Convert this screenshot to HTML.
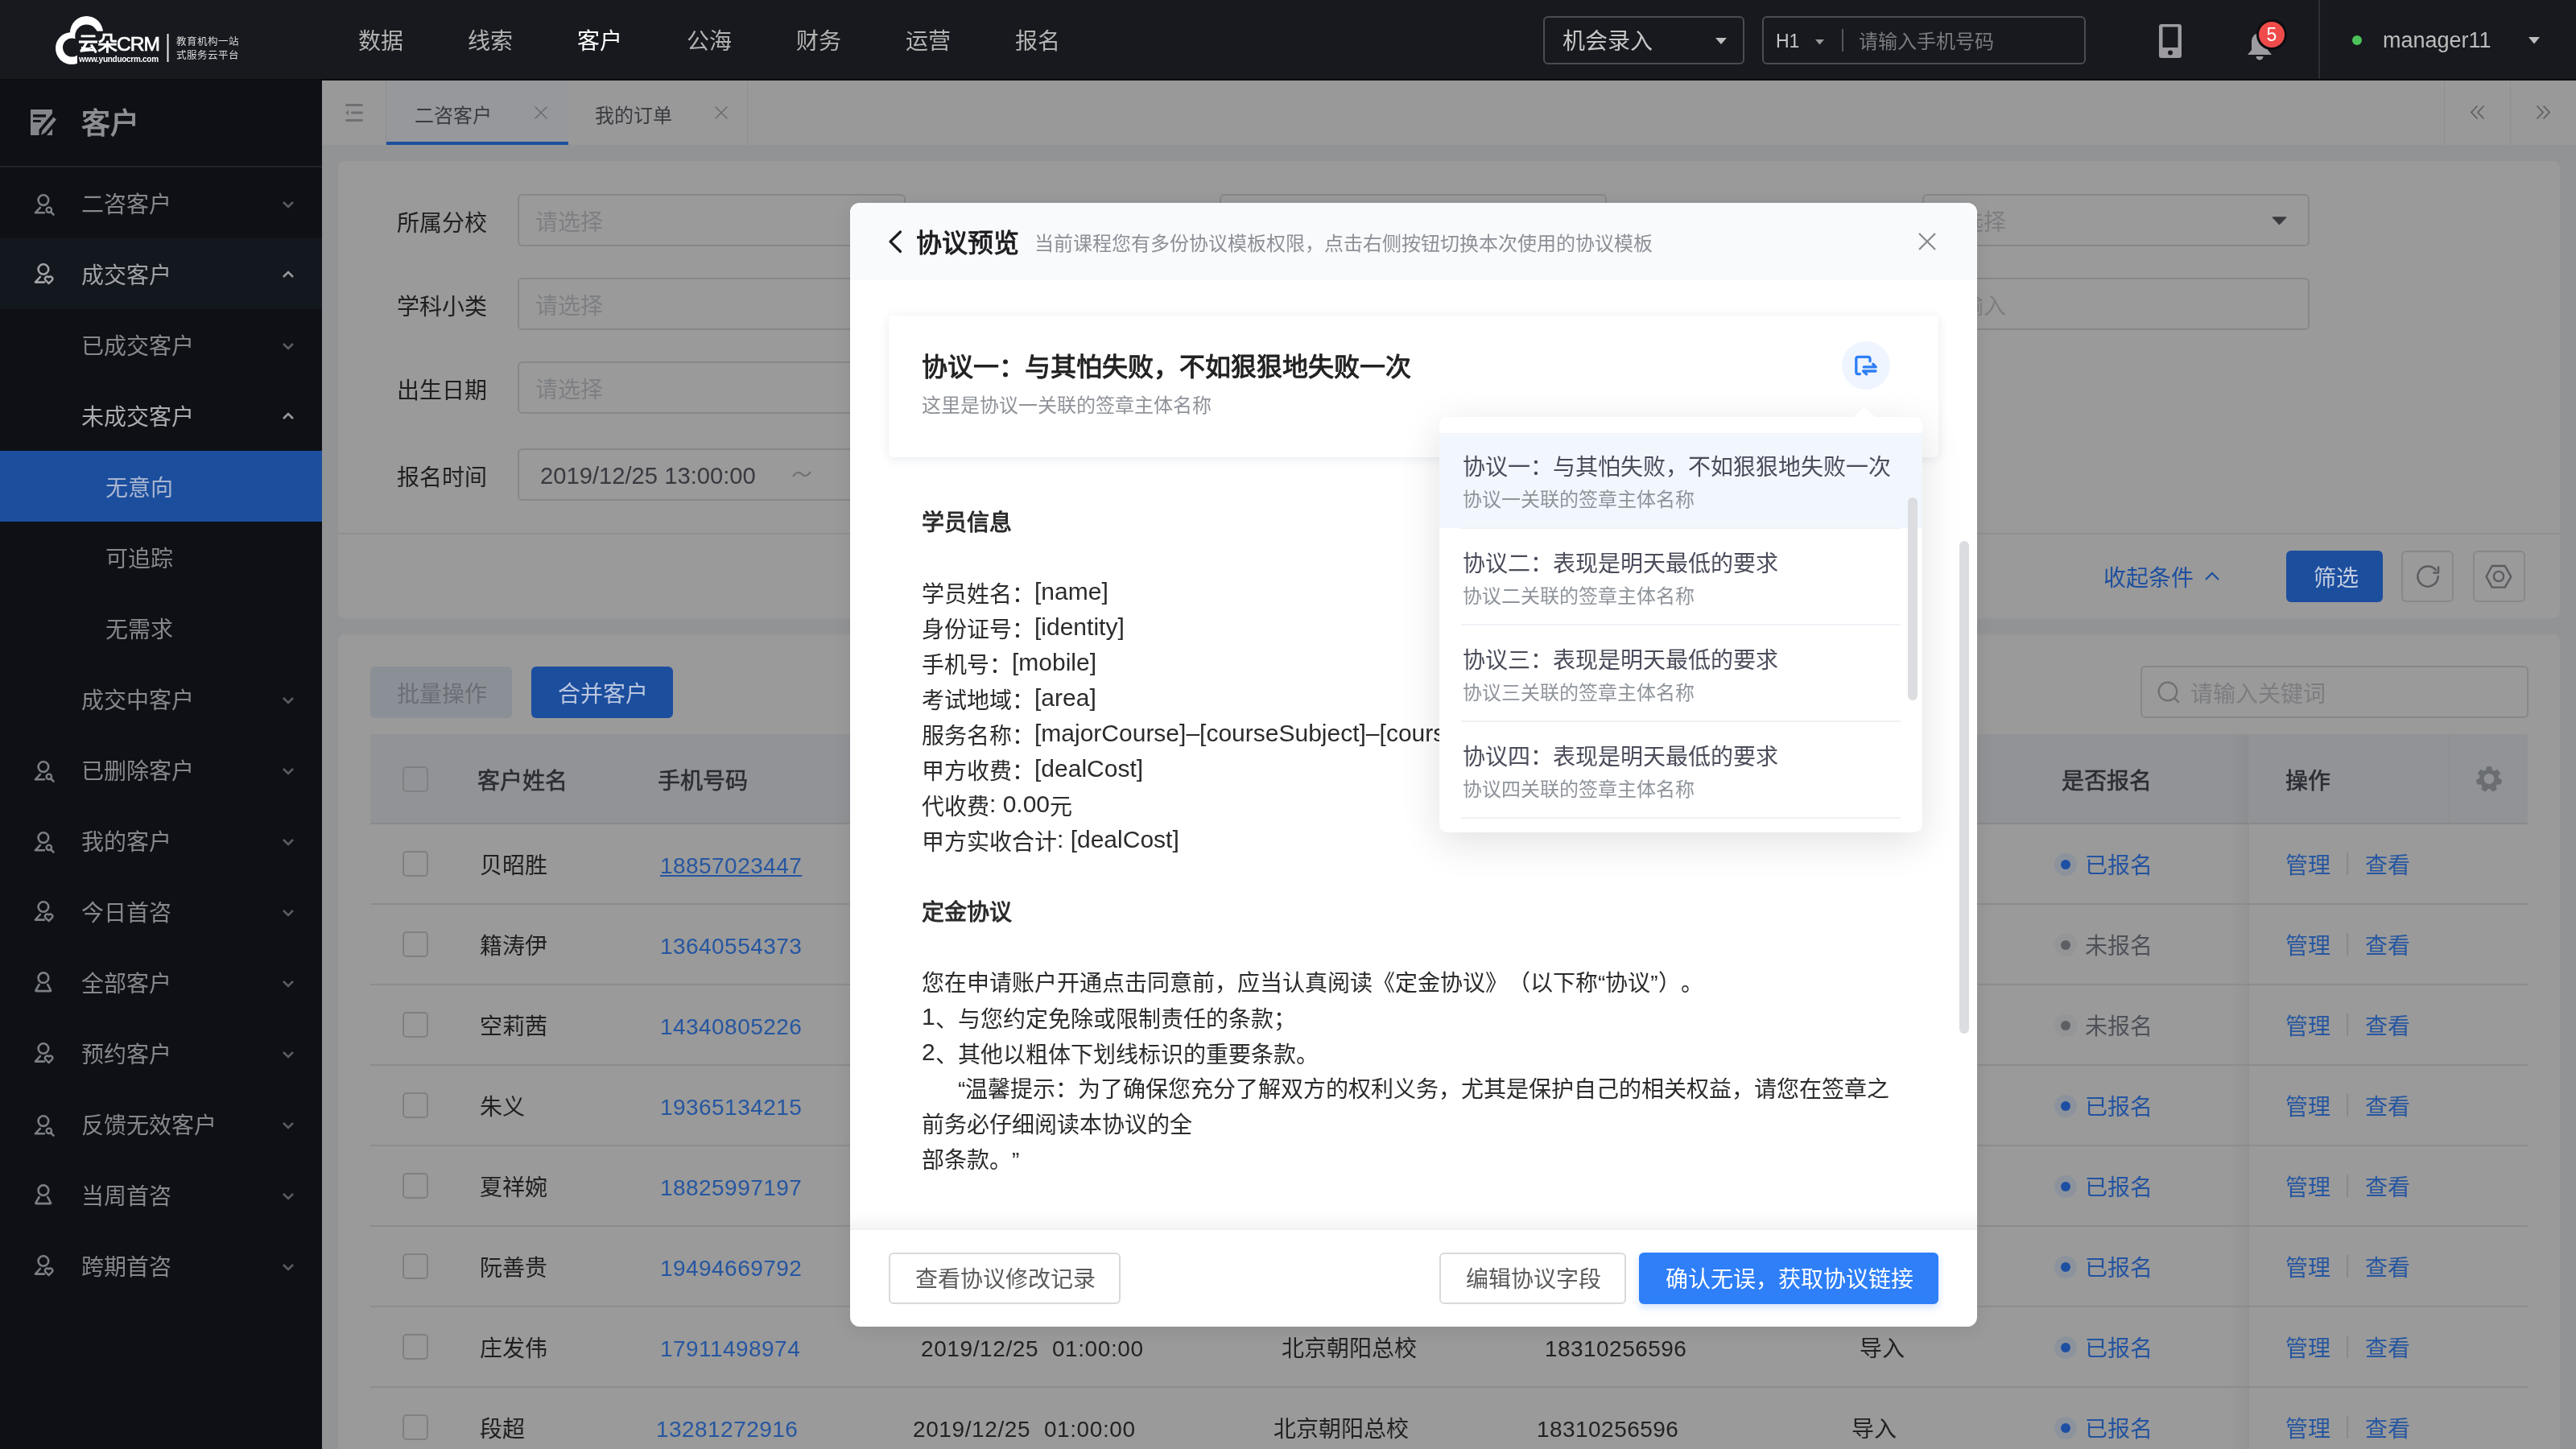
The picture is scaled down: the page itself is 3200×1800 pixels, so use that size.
<!DOCTYPE html>
<html lang="zh-CN"><head><meta charset="utf-8">
<style>
*{box-sizing:border-box;margin:0;padding:0}
html,body{width:3200px;height:1800px;overflow:hidden}
body{position:relative;will-change:transform;font-family:"Liberation Sans",sans-serif;background:#929395;color:#222}
.a{position:absolute}
.t{position:absolute;white-space:nowrap;line-height:40px;height:40px;text-spacing-trim:space-all}
svg{position:absolute;overflow:visible}
/* header */
#hdr{left:0;top:0;width:3200px;height:100px;background:#17191e;border-bottom:2px solid #0b0c0f}
.nav{font-size:28px;color:#b3b3b3;top:32px}
.box{border:2px solid #4a4c51;border-radius:6px}
/* sidebar */
#side{left:0;top:100px;width:400px;height:1700px;background:#0e1015}
.si{font-size:28px;color:#86888c}
/* main */
.card{background:#9a9a9a;border-radius:8px}
.inp{border:2px solid #858688;border-radius:6px;height:65px}
.ph{font-size:28px;color:#7d7e81}
.lbl{font-size:28px;color:#1f1f20}
.row-b{height:2px;background:#8b8c8e}
.cell{font-size:28px;color:#222}
.lnk{font-size:28px;color:#1c4b98}
</style></head>
<body>
<!-- HEADER -->
<div id="hdr" class="a"></div>
<svg style="left:0;top:0" width="320" height="100" viewBox="0 0 320 100">
  <defs>
    <mask id="cm">
      <rect x="0" y="0" width="320" height="100" fill="black"/>
      <circle cx="89" cy="60" r="20" fill="white"/>
      <circle cx="107.5" cy="40.5" r="20.5" fill="white"/>
      <circle cx="89.5" cy="59" r="11.5" fill="black"/>
      <circle cx="107.5" cy="44.8" r="14.3" fill="black"/>
      <rect x="96" y="62" width="40" height="30" fill="black"/>
      <rect x="115" y="38.7" width="20" height="30" fill="black"/>
    </mask>
  </defs>
  <rect x="0" y="0" width="320" height="100" fill="#fff" mask="url(#cm)"/>
  <rect x="207.5" y="42" width="2" height="35" fill="#e8e8e8"/>
</svg>
<div class="t" style="left:97px;top:34px;font-size:25px;font-weight:bold;color:#fff;line-height:40px;letter-spacing:-1px">云朵<span style="font-weight:normal;-webkit-text-stroke:0.7px #fff;letter-spacing:-1px;font-size:24.5px">CRM</span></div>
<div class="t" style="left:98px;top:64px;font-size:10px;line-height:20px;height:20px;color:#fff;font-weight:bold;letter-spacing:-0.28px">www.yunduocrm.com</div>
<div class="t" style="left:219px;top:44px;font-size:12.5px;line-height:17px;height:40px;color:#dcdcdc;white-space:normal;width:80px">教育机构一站<br>式服务云平台</div>

<div class="t nav" style="left:445px">数据</div>
<div class="t nav" style="left:581px">线索</div>
<div class="t nav" style="left:717px;color:#fff">客户</div>
<div class="t nav" style="left:853px">公海</div>
<div class="t nav" style="left:989px">财务</div>
<div class="t nav" style="left:1125px">运营</div>
<div class="t nav" style="left:1261px">报名</div>

<div class="a box" style="left:1917px;top:20px;width:250px;height:60px"></div>
<div class="t" style="left:1941px;top:32px;font-size:28px;color:#c6c6c6">机会录入</div>
<svg style="left:2131px;top:47px" width="14" height="8"><path d="M0 0H14L7 8Z" fill="#bdbdbd"/></svg>
<div class="a box" style="left:2189px;top:20px;width:402px;height:60px"></div>
<div class="t" style="left:2206px;top:31px;font-size:23px;color:#c6c6c6">H1</div>
<svg style="left:2255px;top:49px" width="11" height="7"><path d="M0 0H11L5.5 6.5Z" fill="#9a9a9a"/></svg>
<div class="a" style="left:2288px;top:36px;width:2px;height:28px;background:#55575c"></div>
<div class="t" style="left:2309px;top:32px;font-size:24px;color:#7a7c80">请输入手机号码</div>

<svg style="left:2682px;top:30px" width="28" height="42" viewBox="0 0 28 42">
  <rect x="0" y="0" width="28" height="42" rx="3" fill="#9c9ca0"/>
  <rect x="4.5" y="3.5" width="19" height="25.5" fill="#17191e"/>
  <circle cx="14" cy="35.5" r="3" fill="#17191e"/>
</svg>
<svg style="left:2790px;top:38px" width="34" height="38" viewBox="0 0 34 38">
  <path d="M17 3C10.5 3 7 8 7 14V24L2 30H32L27 24V14C27 8 23.5 3 17 3Z" fill="#9c9ca0"/>
  <path d="M12.5 32A4.5 4.5 0 0 0 21.5 32Z" fill="#9c9ca0"/>
</svg>
<div class="a" style="left:2803px;top:24px;width:38px;height:38px;border-radius:50%;background:#ef4b4b;border:3px solid #0b0c0f"></div>
<div class="t" style="left:2803px;top:23px;width:38px;text-align:center;font-size:23px;color:#fff">5</div>
<div class="a" style="left:2880px;top:0;width:2px;height:98px;background:#2c2e33"></div>
<div class="a" style="left:2922px;top:44px;width:12px;height:12px;border-radius:50%;background:#4cc25a"></div>
<div class="t" style="left:2960px;top:30px;font-size:27px;color:#bdbdbd">manager11</div>
<svg style="left:3141px;top:46px" width="14" height="9"><path d="M0 0H14L7 8.5Z" fill="#bdbdbd"/></svg>

<!-- SIDEBAR -->
<div id="side" class="a"></div>

<svg style="left:30px;top:130px" width="50" height="45" viewBox="0 0 50 45"><path d="M8 6H35V11L18.5 31V38H8Z M28 38L35 30V38Z" fill="#83848c"/><rect x="11" y="12.2" width="16" height="3.4" fill="#0e1015"/><rect x="11" y="19" width="9.8" height="2.9" fill="#0e1015"/><path d="M36.5 15.5L40 18.5L26.5 34.5L21 38L22.5 32Z" fill="#83848c"/></svg>
<div class="t" style="left:101px;top:134.0px;height:40px;line-height:40px;font-size:36px;color:#8d8e92;font-weight:bold">客户</div>
<div class="a" style="left:0px;top:206px;width:400px;height:2px;background:#1f2126"></div>
<div class="a" style="left:0px;top:296px;width:400px;height:88px;background:#13171e"></div>
<div class="a" style="left:0px;top:560px;width:400px;height:88px;background:#1c4e9e"></div>
<div class="t" style="left:101px;top:235.0px;height:40px;line-height:40px;font-size:28px;color:#86888c;">二咨客户</div>
<svg style="left:30px;top:225px" width="60" height="60" viewBox="0 0 60 60"><circle cx="23.9" cy="23.6" r="6.3" stroke="#7b7f86" stroke-width="2.6" fill="none" stroke-linecap="round" stroke-linejoin="round"/><path d="M19.9 32.9L13.9 39.3H25" stroke="#7b7f86" stroke-width="2.6" fill="none" stroke-linecap="round" stroke-linejoin="round"/><circle cx="30.8" cy="35.8" r="3.2" fill="none" stroke="#7b7f86" stroke-width="2.4"/><path d="M33.3 38.3L36.5 41.6" stroke="#7b7f86" stroke-width="2.6" fill="none" stroke-linecap="round" stroke-linejoin="round"/></svg>
<svg style="left:0px;top:0px" width="1" height="1" viewBox="0 0 1 1"><path d="M352 251 L358 257 L364 251" fill="none" stroke="#585d65" stroke-width="2.6"/></svg>
<div class="t" style="left:101px;top:323.0px;height:40px;line-height:40px;font-size:28px;color:#a2a3a6;">成交客户</div>
<svg style="left:30px;top:313px" width="60" height="60" viewBox="0 0 60 60"><circle cx="23.9" cy="21.5" r="6.3" stroke="#a3a4a7" stroke-width="2.6" fill="none" stroke-linecap="round" stroke-linejoin="round"/><path d="M19.9 31L13.9 37.6H25" stroke="#a3a4a7" stroke-width="2.6" fill="none" stroke-linecap="round" stroke-linejoin="round"/><path d="M30.6 39.2L26.6 35.2A2.8 2.8 0 0 1 30.6 31.3A2.8 2.8 0 0 1 34.6 35.2Z" fill="none" stroke="#a3a4a7" stroke-width="2.4" stroke-linejoin="round"/></svg>
<svg style="left:0px;top:0px" width="1" height="1" viewBox="0 0 1 1"><path d="M352 344 L358 338 L364 344" fill="none" stroke="#9a9b9e" stroke-width="2.6"/></svg>
<div class="t" style="left:101px;top:411.0px;height:40px;line-height:40px;font-size:28px;color:#86888c;">已成交客户</div>
<svg style="left:0px;top:0px" width="1" height="1" viewBox="0 0 1 1"><path d="M352 427 L358 433 L364 427" fill="none" stroke="#585d65" stroke-width="2.6"/></svg>
<div class="t" style="left:101px;top:499.0px;height:40px;line-height:40px;font-size:28px;color:#acadb0;">未成交客户</div>
<svg style="left:0px;top:0px" width="1" height="1" viewBox="0 0 1 1"><path d="M352 520 L358 514 L364 520" fill="none" stroke="#9a9b9e" stroke-width="2.6"/></svg>
<div class="t" style="left:131px;top:587.0px;height:40px;line-height:40px;font-size:28px;color:#a9b6cf;">无意向</div>
<div class="t" style="left:131px;top:675.0px;height:40px;line-height:40px;font-size:28px;color:#86888c;">可追踪</div>
<div class="t" style="left:131px;top:763.0px;height:40px;line-height:40px;font-size:28px;color:#86888c;">无需求</div>
<div class="t" style="left:101px;top:851.0px;height:40px;line-height:40px;font-size:28px;color:#86888c;">成交中客户</div>
<svg style="left:0px;top:0px" width="1" height="1" viewBox="0 0 1 1"><path d="M352 867 L358 873 L364 867" fill="none" stroke="#585d65" stroke-width="2.6"/></svg>
<div class="t" style="left:101px;top:939.0px;height:40px;line-height:40px;font-size:28px;color:#86888c;">已删除客户</div>
<svg style="left:30px;top:929px" width="60" height="60" viewBox="0 0 60 60"><circle cx="23.9" cy="23.6" r="6.3" stroke="#7b7f86" stroke-width="2.6" fill="none" stroke-linecap="round" stroke-linejoin="round"/><path d="M19.9 32.9L13.9 39.3H25" stroke="#7b7f86" stroke-width="2.6" fill="none" stroke-linecap="round" stroke-linejoin="round"/><circle cx="30.8" cy="35.8" r="3.2" fill="none" stroke="#7b7f86" stroke-width="2.4"/><path d="M33.3 38.3L36.5 41.6" stroke="#7b7f86" stroke-width="2.6" fill="none" stroke-linecap="round" stroke-linejoin="round"/></svg>
<svg style="left:0px;top:0px" width="1" height="1" viewBox="0 0 1 1"><path d="M352 955 L358 961 L364 955" fill="none" stroke="#585d65" stroke-width="2.6"/></svg>
<div class="t" style="left:101px;top:1027.0px;height:40px;line-height:40px;font-size:28px;color:#86888c;">我的客户</div>
<svg style="left:30px;top:1017px" width="60" height="60" viewBox="0 0 60 60"><circle cx="23.9" cy="23.6" r="6.3" stroke="#7b7f86" stroke-width="2.6" fill="none" stroke-linecap="round" stroke-linejoin="round"/><path d="M19.9 32.9L13.9 39.3H25" stroke="#7b7f86" stroke-width="2.6" fill="none" stroke-linecap="round" stroke-linejoin="round"/><circle cx="30.8" cy="35.8" r="3.2" fill="none" stroke="#7b7f86" stroke-width="2.4"/><path d="M33.3 38.3L36.5 41.6" stroke="#7b7f86" stroke-width="2.6" fill="none" stroke-linecap="round" stroke-linejoin="round"/></svg>
<svg style="left:0px;top:0px" width="1" height="1" viewBox="0 0 1 1"><path d="M352 1043 L358 1049 L364 1043" fill="none" stroke="#585d65" stroke-width="2.6"/></svg>
<div class="t" style="left:101px;top:1115.0px;height:40px;line-height:40px;font-size:28px;color:#86888c;">今日首咨</div>
<svg style="left:30px;top:1105px" width="60" height="60" viewBox="0 0 60 60"><circle cx="23.9" cy="21.5" r="6.3" stroke="#7b7f86" stroke-width="2.6" fill="none" stroke-linecap="round" stroke-linejoin="round"/><path d="M19.9 31L13.9 37.6H25" stroke="#7b7f86" stroke-width="2.6" fill="none" stroke-linecap="round" stroke-linejoin="round"/><path d="M30.6 39.2L26.6 35.2A2.8 2.8 0 0 1 30.6 31.3A2.8 2.8 0 0 1 34.6 35.2Z" fill="none" stroke="#7b7f86" stroke-width="2.4" stroke-linejoin="round"/></svg>
<svg style="left:0px;top:0px" width="1" height="1" viewBox="0 0 1 1"><path d="M352 1131 L358 1137 L364 1131" fill="none" stroke="#585d65" stroke-width="2.6"/></svg>
<div class="t" style="left:101px;top:1203.0px;height:40px;line-height:40px;font-size:28px;color:#86888c;">全部客户</div>
<svg style="left:30px;top:1193px" width="60" height="60" viewBox="0 0 60 60"><circle cx="23.9" cy="21.7" r="6.3" stroke="#7b7f86" stroke-width="2.6" fill="none" stroke-linecap="round" stroke-linejoin="round"/><path d="M18.6 30L14.6 37Q14 38.1 15.3 38.1H32.2Q33.5 38.1 32.9 37L29.2 30" stroke="#7b7f86" stroke-width="2.6" fill="none" stroke-linecap="round" stroke-linejoin="round"/></svg>
<svg style="left:0px;top:0px" width="1" height="1" viewBox="0 0 1 1"><path d="M352 1219 L358 1225 L364 1219" fill="none" stroke="#585d65" stroke-width="2.6"/></svg>
<div class="t" style="left:101px;top:1291.0px;height:40px;line-height:40px;font-size:28px;color:#86888c;">预约客户</div>
<svg style="left:30px;top:1281px" width="60" height="60" viewBox="0 0 60 60"><circle cx="23.9" cy="21.5" r="6.3" stroke="#7b7f86" stroke-width="2.6" fill="none" stroke-linecap="round" stroke-linejoin="round"/><path d="M19.9 31L13.9 37.6H25" stroke="#7b7f86" stroke-width="2.6" fill="none" stroke-linecap="round" stroke-linejoin="round"/><path d="M30.6 39.2L26.6 35.2A2.8 2.8 0 0 1 30.6 31.3A2.8 2.8 0 0 1 34.6 35.2Z" fill="none" stroke="#7b7f86" stroke-width="2.4" stroke-linejoin="round"/></svg>
<svg style="left:0px;top:0px" width="1" height="1" viewBox="0 0 1 1"><path d="M352 1307 L358 1313 L364 1307" fill="none" stroke="#585d65" stroke-width="2.6"/></svg>
<div class="t" style="left:101px;top:1379.0px;height:40px;line-height:40px;font-size:28px;color:#86888c;">反馈无效客户</div>
<svg style="left:30px;top:1369px" width="60" height="60" viewBox="0 0 60 60"><circle cx="23.9" cy="23.6" r="6.3" stroke="#7b7f86" stroke-width="2.6" fill="none" stroke-linecap="round" stroke-linejoin="round"/><path d="M19.9 32.9L13.9 39.3H25" stroke="#7b7f86" stroke-width="2.6" fill="none" stroke-linecap="round" stroke-linejoin="round"/><circle cx="30.8" cy="35.8" r="3.2" fill="none" stroke="#7b7f86" stroke-width="2.4"/><path d="M33.3 38.3L36.5 41.6" stroke="#7b7f86" stroke-width="2.6" fill="none" stroke-linecap="round" stroke-linejoin="round"/></svg>
<svg style="left:0px;top:0px" width="1" height="1" viewBox="0 0 1 1"><path d="M352 1395 L358 1401 L364 1395" fill="none" stroke="#585d65" stroke-width="2.6"/></svg>
<div class="t" style="left:101px;top:1467.0px;height:40px;line-height:40px;font-size:28px;color:#86888c;">当周首咨</div>
<svg style="left:30px;top:1457px" width="60" height="60" viewBox="0 0 60 60"><circle cx="23.9" cy="21.7" r="6.3" stroke="#7b7f86" stroke-width="2.6" fill="none" stroke-linecap="round" stroke-linejoin="round"/><path d="M18.6 30L14.6 37Q14 38.1 15.3 38.1H32.2Q33.5 38.1 32.9 37L29.2 30" stroke="#7b7f86" stroke-width="2.6" fill="none" stroke-linecap="round" stroke-linejoin="round"/></svg>
<svg style="left:0px;top:0px" width="1" height="1" viewBox="0 0 1 1"><path d="M352 1483 L358 1489 L364 1483" fill="none" stroke="#585d65" stroke-width="2.6"/></svg>
<div class="t" style="left:101px;top:1555.0px;height:40px;line-height:40px;font-size:28px;color:#86888c;">跨期首咨</div>
<svg style="left:30px;top:1545px" width="60" height="60" viewBox="0 0 60 60"><circle cx="23.9" cy="21.5" r="6.3" stroke="#7b7f86" stroke-width="2.6" fill="none" stroke-linecap="round" stroke-linejoin="round"/><path d="M19.9 31L13.9 37.6H25" stroke="#7b7f86" stroke-width="2.6" fill="none" stroke-linecap="round" stroke-linejoin="round"/><path d="M30.6 39.2L26.6 35.2A2.8 2.8 0 0 1 30.6 31.3A2.8 2.8 0 0 1 34.6 35.2Z" fill="none" stroke="#7b7f86" stroke-width="2.4" stroke-linejoin="round"/></svg>
<svg style="left:0px;top:0px" width="1" height="1" viewBox="0 0 1 1"><path d="M352 1571 L358 1577 L364 1571" fill="none" stroke="#585d65" stroke-width="2.6"/></svg>
<div class="a" style="left:400px;top:100px;width:2800px;height:80px;background:#999999"></div>
<div class="a" style="left:480px;top:100px;width:226px;height:80px;background:#97989b"></div>
<div class="a" style="left:480px;top:176px;width:226px;height:4px;background:#1d4f9f"></div>
<div class="a" style="left:479px;top:100px;width:1px;height:80px;background:#8f9094"></div>
<div class="a" style="left:928px;top:100px;width:1px;height:80px;background:#8f9094"></div>
<div class="a" style="left:3036px;top:100px;width:1px;height:80px;background:#8f9094"></div>
<div class="a" style="left:3118px;top:100px;width:1px;height:80px;background:#8f9094"></div>
<svg style="left:428px;top:128px" width="24" height="24" viewBox="0 0 24 24"><rect x="1" y="1" width="22" height="3" rx="1.5" fill="#6f7073"/><rect x="8" y="10.5" width="15" height="3" rx="1.5" fill="#6f7073"/><rect x="1" y="20" width="22" height="3" rx="1.5" fill="#6f7073"/><path d="M1 12L5 8.5V15.5Z" fill="#6f7073"/></svg>
<div class="t" style="left:515px;top:124.0px;height:40px;line-height:40px;font-size:24px;color:#3a3b40;">二咨客户</div>
<div class="t" style="left:739px;top:124.0px;height:40px;line-height:40px;font-size:24px;color:#3a3b40;">我的订单</div>
<svg style="left:664px;top:132px" width="16" height="16" viewBox="0 0 16 16"><path d="M1 1L15 15M15 1L1 15" stroke="#6a6d6e" stroke-width="1.5" stroke-linecap="round"/></svg>
<svg style="left:888px;top:132px" width="16" height="16" viewBox="0 0 16 16"><path d="M1 1L15 15M15 1L1 15" stroke="#6a6d6e" stroke-width="1.5" stroke-linecap="round"/></svg>
<svg style="left:3069px;top:131px" width="18" height="18" viewBox="0 0 18 18"><path d="M8.5 0.5L1 8.5L8.5 16.5M16.5 0.5L9 8.5L16.5 16.5" fill="none" stroke="#5f6064" stroke-width="1.8"/></svg>
<svg style="left:3151px;top:131px" width="18" height="18" viewBox="0 0 18 18"><path d="M0.5 0.5L8 8.5L0.5 16.5M8.5 0.5L16 8.5L8.5 16.5" fill="none" stroke="#5f6064" stroke-width="1.8"/></svg>
<div class="a" style="left:420px;top:200px;width:2760px;height:568px;background:#9a9a9a;border-radius:8px"></div>
<div class="a" style="left:643px;top:241px;width:482px;height:65px;border:2px solid #868789;border-radius:6px"></div>
<div class="a" style="left:643px;top:345px;width:482px;height:65px;border:2px solid #868789;border-radius:6px"></div>
<div class="a" style="left:643px;top:449px;width:482px;height:65px;border:2px solid #868789;border-radius:6px"></div>
<div class="a" style="left:643px;top:557px;width:482px;height:65px;border:2px solid #868789;border-radius:6px"></div>
<div class="a" style="left:1515px;top:241px;width:481px;height:65px;border:2px solid #868789;border-radius:6px"></div>
<div class="a" style="left:1515px;top:345px;width:481px;height:65px;border:2px solid #868789;border-radius:6px"></div>
<div class="a" style="left:2388px;top:241px;width:481px;height:65px;border:2px solid #868789;border-radius:6px"></div>
<div class="a" style="left:2388px;top:345px;width:481px;height:65px;border:2px solid #868789;border-radius:6px"></div>
<div class="t" style="left:493px;top:258.0px;height:40px;line-height:40px;font-size:28px;color:#202021;">所属分校</div>
<div class="t" style="left:665px;top:257.0px;height:40px;line-height:40px;font-size:28px;color:#7e7f82;">请选择</div>
<div class="t" style="left:493px;top:362.0px;height:40px;line-height:40px;font-size:28px;color:#202021;">学科小类</div>
<div class="t" style="left:665px;top:361.0px;height:40px;line-height:40px;font-size:28px;color:#7e7f82;">请选择</div>
<div class="t" style="left:493px;top:466.0px;height:40px;line-height:40px;font-size:28px;color:#202021;">出生日期</div>
<div class="t" style="left:665px;top:465.0px;height:40px;line-height:40px;font-size:28px;color:#7e7f82;">请选择</div>
<div class="t" style="left:493px;top:574.0px;height:40px;line-height:40px;font-size:28px;color:#202021;">报名时间</div>
<div class="t" style="left:671px;top:571.0px;height:40px;line-height:40px;font-size:29.2px;color:#393a40;">2019/12/25 13:00:00</div>
<svg style="left:984px;top:583px" width="24" height="14" viewBox="0 0 24 14"><path d="M1 9C5 3 9 3 12 6S19 9 23 3" fill="none" stroke="#6e6f73" stroke-width="2"/></svg>
<div class="t" style="left:1537px;top:257.0px;height:40px;line-height:40px;font-size:28px;color:#7e7f82;">请选择</div>
<div class="t" style="left:1537px;top:361.0px;height:40px;line-height:40px;font-size:28px;color:#7e7f82;">请输入</div>
<div class="t" style="left:2408px;top:257.0px;height:40px;line-height:40px;font-size:28px;color:#7e7f82;">请选择</div>
<div class="t" style="left:2408px;top:361.0px;height:40px;line-height:40px;font-size:28px;color:#7e7f82;">请输入</div>
<svg style="left:2822px;top:269px" width="20" height="12" viewBox="0 0 20 12"><path d="M1.5 1H17.5L9.5 9.5Z" fill="#3a3b3f" stroke="#3a3b3f" stroke-width="1.6" stroke-linejoin="round"/></svg>
<div class="t" style="left:1539px;top:257.0px;height:40px;line-height:40px;font-size:28px;color:#222;"></div>
<div class="a" style="left:420px;top:662px;width:2760px;height:2px;background:#8f9092"></div>
<div class="t" style="left:2613px;top:699.0px;height:40px;line-height:40px;font-size:28px;color:#1d4f9f;">收起条件</div>
<svg style="left:2739px;top:711px" width="18" height="10" viewBox="0 0 18 10"><path d="M1 9L9 1L17 9" fill="none" stroke="#1d4f9f" stroke-width="2.2"/></svg>
<div class="a" style="left:2840px;top:684px;width:120px;height:64px;background:#1c4e9e;border-radius:6px"></div>
<div class="t" style="left:2874px;top:699.0px;height:40px;line-height:40px;font-size:28px;color:#c3cde0;">筛选</div>
<div class="a" style="left:2983px;top:684px;width:65px;height:64px;border:2px solid #878889;border-radius:6px"></div>
<div class="a" style="left:3072px;top:684px;width:65px;height:64px;border:2px solid #878889;border-radius:6px"></div>
<svg style="left:3000px;top:700px" width="32" height="32" viewBox="0 0 32 32"><g fill="none" stroke="#5b5c60" stroke-width="2.5" stroke-linecap="round" stroke-linejoin="round"><path d="M28.6 16A12.6 12.6 0 1 1 25.65 7.9"/><path d="M29 4.5V11.5H23.3"/></g></svg>
<svg style="left:3087px;top:700px" width="34" height="32" viewBox="0 0 34 32"><path d="M8.7 3H24.7L32.3 16.3L24.7 29.6H8.7L1.6 16.3Z" fill="none" stroke="#5b5c60" stroke-width="2.4" stroke-linejoin="round"/><circle cx="17" cy="16" r="6.1" fill="none" stroke="#5b5c60" stroke-width="2.4"/></svg>
<div class="a" style="left:420px;top:788px;width:2760px;height:1100px;background:#9a9a9a;border-radius:8px"></div>
<div class="a" style="left:460px;top:828px;width:176px;height:64px;background:#8b8f96;border-radius:6px"></div>
<div class="t" style="left:493px;top:843.0px;height:40px;line-height:40px;font-size:28px;color:#6b6e74;">批量操作</div>
<div class="a" style="left:660px;top:828px;width:176px;height:64px;background:#1c4e9e;border-radius:6px"></div>
<div class="t" style="left:693px;top:843.0px;height:40px;line-height:40px;font-size:28px;color:#b9c6df;">合并客户</div>
<div class="a" style="left:2659px;top:827px;width:482px;height:65px;border:2px solid #868789;border-radius:6px"></div>
<svg style="left:2680px;top:846px" width="30" height="30" viewBox="0 0 30 30"><circle cx="12.9" cy="13" r="11.3" fill="none" stroke="#6e7073" stroke-width="2.2"/><path d="M21 21L26.6 26.6" stroke="#6e7073" stroke-width="2.4"/></svg>
<div class="t" style="left:2721px;top:843.0px;height:40px;line-height:40px;font-size:28px;color:#7c7d80;">请输入关键词</div>
<div class="a" style="left:460px;top:912px;width:2680px;height:110px;background:#929396"></div>
<div class="a" style="left:460px;top:1022px;width:2680px;height:2px;background:#89898b"></div>
<div class="a" style="left:500px;top:952px;width:32px;height:32px;border:2px solid #7f8082;border-radius:5px"></div>
<div class="t" style="left:593px;top:951.0px;height:40px;line-height:40px;font-size:28px;color:#2c2d34;-webkit-text-stroke:0.6px #2c2d34">客户姓名</div>
<div class="t" style="left:817px;top:951.0px;height:40px;line-height:40px;font-size:28px;color:#2c2d34;-webkit-text-stroke:0.6px #2c2d34">手机号码</div>
<div class="t" style="left:2561px;top:951.0px;height:40px;line-height:40px;font-size:28px;color:#2c2d34;-webkit-text-stroke:0.6px #2c2d34">是否报名</div>
<div class="t" style="left:2839px;top:951.0px;height:40px;line-height:40px;font-size:28px;color:#2c2d34;-webkit-text-stroke:0.6px #2c2d34">操作</div>
<svg style="left:3076px;top:952px" width="32" height="32" viewBox="0 0 32 32"><path fill="#6b6e71" stroke="#6b6e71" stroke-width="1" stroke-linejoin="round" d="M12.55 4.72 L13.29 0.64 L18.71 0.64 L19.45 4.72 L22.67 6.27 L26.32 4.30 L29.70 8.54 L26.97 11.66 L27.77 15.15 L31.58 16.78 L30.38 22.06 L26.23 21.87 L24.00 24.67 L25.11 28.67 L20.23 31.02 L17.79 27.66 L14.21 27.66 L11.77 31.02 L6.89 28.67 L8.00 24.67 L5.77 21.87 L1.62 22.06 L0.42 16.78 L4.23 15.15 L5.03 11.66 L2.30 8.54 L5.68 4.30 L9.33 6.27Z"/><circle cx="16" cy="15.5" r="6.5" fill="#929396"/></svg>
<div class="a" style="left:3042px;top:912px;width:2px;height:110px;background:#8d8e90"></div>
<div class="a" style="left:2770px;top:912px;width:23px;height:900px;background:linear-gradient(to right,rgba(0,0,0,0),rgba(0,0,0,0.04))"></div>
<div class="a" style="left:2793px;top:912px;width:1px;height:900px;background:#919294"></div>
<div class="a" style="left:460px;top:1122px;width:2680px;height:2px;background:#8b8c8e"></div>
<div class="a" style="left:500px;top:1057px;width:32px;height:32px;border:2px solid #7f8082;border-radius:5px"></div>
<div class="t" style="left:596px;top:1056.0px;height:40px;line-height:40px;font-size:28px;color:#202021;">贝昭胜</div>
<div class="t" style="left:820px;top:1056.0px;height:40px;line-height:40px;font-size:28px;color:#2656a0;text-decoration:underline;letter-spacing:0.45px">18857023447</div>
<div class="a" style="left:2552px;top:1060px;width:28px;height:28px;background:#8d939c;border-radius:50%"></div>
<div class="a" style="left:2560px;top:1068px;width:12px;height:12px;background:#1d4fa3;border-radius:50%"></div>
<div class="t" style="left:2590px;top:1056.0px;height:40px;line-height:40px;font-size:28px;color:#2353a0;">已报名</div>
<div class="t" style="left:2839px;top:1056.0px;height:40px;line-height:40px;font-size:28px;color:#2656a0;">管理</div>
<div class="a" style="left:2915px;top:1059px;width:2px;height:28px;background:#88898b"></div>
<div class="t" style="left:2938px;top:1056.0px;height:40px;line-height:40px;font-size:28px;color:#2656a0;">查看</div>
<div class="a" style="left:460px;top:1222px;width:2680px;height:2px;background:#8b8c8e"></div>
<div class="a" style="left:500px;top:1157px;width:32px;height:32px;border:2px solid #7f8082;border-radius:5px"></div>
<div class="t" style="left:596px;top:1156.0px;height:40px;line-height:40px;font-size:28px;color:#202021;">籍涛伊</div>
<div class="t" style="left:820px;top:1156.0px;height:40px;line-height:40px;font-size:28px;color:#2656a0;letter-spacing:0.45px">13640554373</div>
<div class="a" style="left:2552px;top:1160px;width:28px;height:28px;background:#949597;border-radius:50%"></div>
<div class="a" style="left:2560px;top:1168px;width:12px;height:12px;background:#5d5f64;border-radius:50%"></div>
<div class="t" style="left:2590px;top:1156.0px;height:40px;line-height:40px;font-size:28px;color:#4e5158;">未报名</div>
<div class="t" style="left:2839px;top:1156.0px;height:40px;line-height:40px;font-size:28px;color:#2656a0;">管理</div>
<div class="a" style="left:2915px;top:1159px;width:2px;height:28px;background:#88898b"></div>
<div class="t" style="left:2938px;top:1156.0px;height:40px;line-height:40px;font-size:28px;color:#2656a0;">查看</div>
<div class="a" style="left:460px;top:1322px;width:2680px;height:2px;background:#8b8c8e"></div>
<div class="a" style="left:500px;top:1257px;width:32px;height:32px;border:2px solid #7f8082;border-radius:5px"></div>
<div class="t" style="left:596px;top:1256.0px;height:40px;line-height:40px;font-size:28px;color:#202021;">空莉茜</div>
<div class="t" style="left:820px;top:1256.0px;height:40px;line-height:40px;font-size:28px;color:#2656a0;letter-spacing:0.45px">14340805226</div>
<div class="a" style="left:2552px;top:1260px;width:28px;height:28px;background:#949597;border-radius:50%"></div>
<div class="a" style="left:2560px;top:1268px;width:12px;height:12px;background:#5d5f64;border-radius:50%"></div>
<div class="t" style="left:2590px;top:1256.0px;height:40px;line-height:40px;font-size:28px;color:#4e5158;">未报名</div>
<div class="t" style="left:2839px;top:1256.0px;height:40px;line-height:40px;font-size:28px;color:#2656a0;">管理</div>
<div class="a" style="left:2915px;top:1259px;width:2px;height:28px;background:#88898b"></div>
<div class="t" style="left:2938px;top:1256.0px;height:40px;line-height:40px;font-size:28px;color:#2656a0;">查看</div>
<div class="a" style="left:460px;top:1422px;width:2680px;height:2px;background:#8b8c8e"></div>
<div class="a" style="left:500px;top:1357px;width:32px;height:32px;border:2px solid #7f8082;border-radius:5px"></div>
<div class="t" style="left:596px;top:1356.0px;height:40px;line-height:40px;font-size:28px;color:#202021;">朱义</div>
<div class="t" style="left:820px;top:1356.0px;height:40px;line-height:40px;font-size:28px;color:#2656a0;letter-spacing:0.45px">19365134215</div>
<div class="a" style="left:2552px;top:1360px;width:28px;height:28px;background:#8d939c;border-radius:50%"></div>
<div class="a" style="left:2560px;top:1368px;width:12px;height:12px;background:#1d4fa3;border-radius:50%"></div>
<div class="t" style="left:2590px;top:1356.0px;height:40px;line-height:40px;font-size:28px;color:#2353a0;">已报名</div>
<div class="t" style="left:2839px;top:1356.0px;height:40px;line-height:40px;font-size:28px;color:#2656a0;">管理</div>
<div class="a" style="left:2915px;top:1359px;width:2px;height:28px;background:#88898b"></div>
<div class="t" style="left:2938px;top:1356.0px;height:40px;line-height:40px;font-size:28px;color:#2656a0;">查看</div>
<div class="a" style="left:460px;top:1522px;width:2680px;height:2px;background:#8b8c8e"></div>
<div class="a" style="left:500px;top:1457px;width:32px;height:32px;border:2px solid #7f8082;border-radius:5px"></div>
<div class="t" style="left:596px;top:1456.0px;height:40px;line-height:40px;font-size:28px;color:#202021;">夏祥婉</div>
<div class="t" style="left:820px;top:1456.0px;height:40px;line-height:40px;font-size:28px;color:#2656a0;letter-spacing:0.45px">18825997197</div>
<div class="a" style="left:2552px;top:1460px;width:28px;height:28px;background:#8d939c;border-radius:50%"></div>
<div class="a" style="left:2560px;top:1468px;width:12px;height:12px;background:#1d4fa3;border-radius:50%"></div>
<div class="t" style="left:2590px;top:1456.0px;height:40px;line-height:40px;font-size:28px;color:#2353a0;">已报名</div>
<div class="t" style="left:2839px;top:1456.0px;height:40px;line-height:40px;font-size:28px;color:#2656a0;">管理</div>
<div class="a" style="left:2915px;top:1459px;width:2px;height:28px;background:#88898b"></div>
<div class="t" style="left:2938px;top:1456.0px;height:40px;line-height:40px;font-size:28px;color:#2656a0;">查看</div>
<div class="a" style="left:460px;top:1622px;width:2680px;height:2px;background:#8b8c8e"></div>
<div class="a" style="left:500px;top:1557px;width:32px;height:32px;border:2px solid #7f8082;border-radius:5px"></div>
<div class="t" style="left:596px;top:1556.0px;height:40px;line-height:40px;font-size:28px;color:#202021;">阮善贵</div>
<div class="t" style="left:820px;top:1556.0px;height:40px;line-height:40px;font-size:28px;color:#2656a0;letter-spacing:0.45px">19494669792</div>
<div class="a" style="left:2552px;top:1560px;width:28px;height:28px;background:#8d939c;border-radius:50%"></div>
<div class="a" style="left:2560px;top:1568px;width:12px;height:12px;background:#1d4fa3;border-radius:50%"></div>
<div class="t" style="left:2590px;top:1556.0px;height:40px;line-height:40px;font-size:28px;color:#2353a0;">已报名</div>
<div class="t" style="left:2839px;top:1556.0px;height:40px;line-height:40px;font-size:28px;color:#2656a0;">管理</div>
<div class="a" style="left:2915px;top:1559px;width:2px;height:28px;background:#88898b"></div>
<div class="t" style="left:2938px;top:1556.0px;height:40px;line-height:40px;font-size:28px;color:#2656a0;">查看</div>
<div class="a" style="left:460px;top:1722px;width:2680px;height:2px;background:#8b8c8e"></div>
<div class="a" style="left:500px;top:1657px;width:32px;height:32px;border:2px solid #7f8082;border-radius:5px"></div>
<div class="t" style="left:596px;top:1656.0px;height:40px;line-height:40px;font-size:28px;color:#202021;">庄发伟</div>
<div class="t" style="left:820px;top:1656.0px;height:40px;line-height:40px;font-size:28px;color:#2656a0;letter-spacing:0.45px">17911498974</div>
<div class="t" style="left:1144px;top:1656.0px;height:40px;line-height:40px;font-size:28px;color:#222;letter-spacing:0.6px">2019/12/25&nbsp;&nbsp;01:00:00</div>
<div class="t" style="left:1592px;top:1656.0px;height:40px;line-height:40px;font-size:28px;color:#222;">北京朝阳总校</div>
<div class="t" style="left:1919px;top:1656.0px;height:40px;line-height:40px;font-size:28px;color:#222;letter-spacing:0.45px">18310256596</div>
<div class="t" style="left:2310px;top:1656.0px;height:40px;line-height:40px;font-size:28px;color:#222;">导入</div>
<div class="a" style="left:2552px;top:1660px;width:28px;height:28px;background:#8d939c;border-radius:50%"></div>
<div class="a" style="left:2560px;top:1668px;width:12px;height:12px;background:#1d4fa3;border-radius:50%"></div>
<div class="t" style="left:2590px;top:1656.0px;height:40px;line-height:40px;font-size:28px;color:#2353a0;">已报名</div>
<div class="t" style="left:2839px;top:1656.0px;height:40px;line-height:40px;font-size:28px;color:#2656a0;">管理</div>
<div class="a" style="left:2915px;top:1659px;width:2px;height:28px;background:#88898b"></div>
<div class="t" style="left:2938px;top:1656.0px;height:40px;line-height:40px;font-size:28px;color:#2656a0;">查看</div>
<div class="a" style="left:460px;top:1822px;width:2680px;height:2px;background:#8b8c8e"></div>
<div class="a" style="left:500px;top:1757px;width:32px;height:32px;border:2px solid #7f8082;border-radius:5px"></div>
<div class="t" style="left:596px;top:1756.0px;height:40px;line-height:40px;font-size:28px;color:#202021;">段超</div>
<div class="t" style="left:815px;top:1756.0px;height:40px;line-height:40px;font-size:28px;color:#2656a0;letter-spacing:0.45px">13281272916</div>
<div class="t" style="left:1134px;top:1756.0px;height:40px;line-height:40px;font-size:28px;color:#222;letter-spacing:0.6px">2019/12/25&nbsp;&nbsp;01:00:00</div>
<div class="t" style="left:1582px;top:1756.0px;height:40px;line-height:40px;font-size:28px;color:#222;">北京朝阳总校</div>
<div class="t" style="left:1909px;top:1756.0px;height:40px;line-height:40px;font-size:28px;color:#222;letter-spacing:0.45px">18310256596</div>
<div class="t" style="left:2300px;top:1756.0px;height:40px;line-height:40px;font-size:28px;color:#222;">导入</div>
<div class="a" style="left:2552px;top:1760px;width:28px;height:28px;background:#8d939c;border-radius:50%"></div>
<div class="a" style="left:2560px;top:1768px;width:12px;height:12px;background:#1d4fa3;border-radius:50%"></div>
<div class="t" style="left:2590px;top:1756.0px;height:40px;line-height:40px;font-size:28px;color:#2353a0;">已报名</div>
<div class="t" style="left:2839px;top:1756.0px;height:40px;line-height:40px;font-size:28px;color:#2656a0;">管理</div>
<div class="a" style="left:2915px;top:1759px;width:2px;height:28px;background:#88898b"></div>
<div class="t" style="left:2938px;top:1756.0px;height:40px;line-height:40px;font-size:28px;color:#2656a0;">查看</div>
<div class="a" style="left:1056px;top:252px;width:1400px;height:1396px;background:#fff;border-radius:12px;box-shadow:0 4px 24px rgba(0,0,0,0.08);overflow:hidden"></div>
<div class="a" style="left:1056px;top:252px;width:1400px;height:96px;background:#f9fafc;border-radius:12px 12px 0 0"></div>
<svg style="left:1100px;top:282px" width="24" height="36" viewBox="0 0 24 36"><path d="M18.5 6L6 18.2L18.5 30.5" fill="none" stroke="#1d1d1f" stroke-width="3.2" stroke-linecap="round" stroke-linejoin="round"/></svg>
<div class="t" style="left:1138px;top:282.0px;height:40px;line-height:40px;font-size:32px;color:#1d1d1f;-webkit-text-stroke:1px #1d1d1f">协议预览</div>
<div class="t" style="left:1284.5px;top:283.0px;height:40px;line-height:40px;font-size:24px;color:#8c9096;">当前课程您有多份协议模板权限，点击右侧按钮切换本次使用的协议模板</div>
<svg style="left:2382px;top:288px" width="24" height="24" viewBox="0 0 24 24"><path d="M2 2L22 22M22 2L2 22" stroke="#8a8d91" stroke-width="2.4"/></svg>
<div class="a" style="left:1104px;top:392px;width:1304px;height:176px;background:#fff;border-radius:6px;box-shadow:0 2px 14px rgba(30,50,90,0.10)"></div>
<div class="t" style="left:1145px;top:436.0px;height:40px;line-height:40px;font-size:32px;color:#222;-webkit-text-stroke:1px #222">协议一：与其怕失败，不如狠狠地失败一次</div>
<div class="t" style="left:1145px;top:484.0px;height:40px;line-height:40px;font-size:24px;color:#8f9399;">这里是协议一关联的签章主体名称</div>
<div class="a" style="left:2288px;top:424px;width:60px;height:60px;background:#eff5fe;border-radius:50%"></div>
<svg style="left:2288px;top:424px" width="60" height="60" viewBox="0 0 60 60"><g fill="none" stroke="#2e7ff7" stroke-width="3.3" stroke-linecap="round" stroke-linejoin="round"><path d="M22.4 40.6H20Q17.8 40.6 17.8 38V22Q17.8 19.3 20.5 19.3H32.5Q35 19.3 35 22V24.8"/><path d="M27.3 31.9H42.2L38.7 28.2"/><path d="M42 37H26.5L30.6 40.8"/></g></svg>
<div class="t" style="left:1145px;top:628.0px;height:44px;line-height:44px;font-size:28px;color:#2b2b2b;"><b>学员信息</b></div>
<div class="t" style="left:1145px;top:716.0px;height:44px;line-height:44px;font-size:28px;color:#2b2b2b;">学员姓名：<span style="font-size:30px;position:relative;top:-3px">[name]</span></div>
<div class="t" style="left:1145px;top:760.0px;height:44px;line-height:44px;font-size:28px;color:#2b2b2b;">身份证号：<span style="font-size:30px;position:relative;top:-3px">[identity]</span></div>
<div class="t" style="left:1145px;top:804.0px;height:44px;line-height:44px;font-size:28px;color:#2b2b2b;">手机号：<span style="font-size:30px;position:relative;top:-3px">[mobile]</span></div>
<div class="t" style="left:1145px;top:848.0px;height:44px;line-height:44px;font-size:28px;color:#2b2b2b;">考试地域：<span style="font-size:30px;position:relative;top:-3px">[area]</span></div>
<div class="t" style="left:1145px;top:892.0px;height:44px;line-height:44px;font-size:28px;color:#2b2b2b;">服务名称：<span style="font-size:30px;position:relative;top:-3px">[majorCourse]–[courseSubject]–[courseName]</span></div>
<div class="t" style="left:1145px;top:936.0px;height:44px;line-height:44px;font-size:28px;color:#2b2b2b;">甲方收费：<span style="font-size:30px;position:relative;top:-3px">[dealCost]</span></div>
<div class="t" style="left:1145px;top:980.0px;height:44px;line-height:44px;font-size:28px;color:#2b2b2b;">代收费<span style="font-size:30px;position:relative;top:-3px">: 0.00</span>元</div>
<div class="t" style="left:1145px;top:1024.0px;height:44px;line-height:44px;font-size:28px;color:#2b2b2b;">甲方实收合计<span style="font-size:30px;position:relative;top:-3px">: [dealCost]</span></div>
<div class="t" style="left:1145px;top:1112.0px;height:44px;line-height:44px;font-size:28px;color:#2b2b2b;"><b>定金协议</b></div>
<div class="t" style="left:1145px;top:1200.0px;height:44px;line-height:44px;font-size:28px;color:#2b2b2b;">您在申请账户开通点击同意前，应当认真阅读《定金协议》（以下称“协议”）。</div>
<div class="t" style="left:1145px;top:1244.0px;height:44px;line-height:44px;font-size:28px;color:#2b2b2b;"><span style="font-size:30px;position:relative;top:-3px">1</span>、与您约定免除或限制责任的条款；</div>
<div class="t" style="left:1145px;top:1288.0px;height:44px;line-height:44px;font-size:28px;color:#2b2b2b;"><span style="font-size:30px;position:relative;top:-3px">2</span>、其他以粗体下划线标识的重要条款。</div>
<div class="t" style="left:1190px;top:1332.0px;height:44px;line-height:44px;font-size:28px;color:#2b2b2b;">“温馨提示：为了确保您充分了解双方的权利义务，尤其是保护自己的相关权益，请您在签章之</div>
<div class="t" style="left:1145px;top:1376.0px;height:44px;line-height:44px;font-size:28px;color:#2b2b2b;">前务必仔细阅读本协议的全</div>
<div class="t" style="left:1145px;top:1420.0px;height:44px;line-height:44px;font-size:28px;color:#2b2b2b;">部条款。”</div>
<div class="a" style="left:1056px;top:1506px;width:1400px;height:22px;background:linear-gradient(to bottom,rgba(0,0,0,0),rgba(0,0,0,0.05))"></div>
<div class="a" style="left:2434px;top:672px;width:12px;height:612px;background:#dcdde0;border-radius:6px"></div>
<div class="a" style="left:1104px;top:1556px;width:288px;height:64px;border:2px solid #d9d9d9;border-radius:6px;background:#fff"></div>
<div class="t" style="left:1137px;top:1570.0px;height:40px;line-height:40px;font-size:28px;color:#5c5c5c;">查看协议修改记录</div>
<div class="a" style="left:1788px;top:1556px;width:232px;height:64px;border:2px solid #d9d9d9;border-radius:6px;background:#fff"></div>
<div class="t" style="left:1821px;top:1570.0px;height:40px;line-height:40px;font-size:28px;color:#5c5c5c;">编辑协议字段</div>
<div class="a" style="left:2036px;top:1556px;width:372px;height:64px;background:#2e7ff8;border-radius:6px;box-shadow:0 4px 10px rgba(46,127,248,0.22)"></div>
<div class="t" style="left:2069px;top:1570.0px;height:40px;line-height:40px;font-size:28px;color:#fff;">确认无误，获取协议链接</div>
<div class="a" style="left:1788px;top:518px;width:600px;height:516px;background:#fff;border-radius:10px;box-shadow:0 12px 50px rgba(0,0,0,0.12)"></div>
<svg style="left:2302px;top:504px" width="28" height="16" viewBox="0 0 28 16"><path d="M0 15L14 1L28 15Z" fill="#fff"/></svg>
<div class="a" style="left:1788px;top:538px;width:600px;height:118px;background:#f2f6fd"></div>
<div class="t" style="left:1817px;top:560.5px;height:40px;line-height:40px;font-size:28px;color:#4a4c5a;">协议一：与其怕失败，不如狠狠地失败一次</div>
<div class="t" style="left:1817px;top:600.5px;height:40px;line-height:40px;font-size:24px;color:#8f949b;">协议一关联的签章主体名称</div>
<div class="a" style="left:1815px;top:655px;width:546px;height:2px;background:#eff2f6"></div>
<div class="t" style="left:1817px;top:680.5px;height:40px;line-height:40px;font-size:28px;color:#4a4c5a;">协议二：表现是明天最低的要求</div>
<div class="t" style="left:1817px;top:720.5px;height:40px;line-height:40px;font-size:24px;color:#8f949b;">协议二关联的签章主体名称</div>
<div class="a" style="left:1815px;top:775px;width:546px;height:2px;background:#eff2f6"></div>
<div class="t" style="left:1817px;top:800.5px;height:40px;line-height:40px;font-size:28px;color:#4a4c5a;">协议三：表现是明天最低的要求</div>
<div class="t" style="left:1817px;top:840.5px;height:40px;line-height:40px;font-size:24px;color:#8f949b;">协议三关联的签章主体名称</div>
<div class="a" style="left:1815px;top:895px;width:546px;height:2px;background:#eff2f6"></div>
<div class="t" style="left:1817px;top:920.5px;height:40px;line-height:40px;font-size:28px;color:#4a4c5a;">协议四：表现是明天最低的要求</div>
<div class="t" style="left:1817px;top:960.5px;height:40px;line-height:40px;font-size:24px;color:#8f949b;">协议四关联的签章主体名称</div>
<div class="a" style="left:1815px;top:1015px;width:546px;height:2px;background:#eff2f6"></div>
<div class="a" style="left:2370px;top:618px;width:12px;height:252px;background:#dcdde0;border-radius:6px"></div>
</body></html>
